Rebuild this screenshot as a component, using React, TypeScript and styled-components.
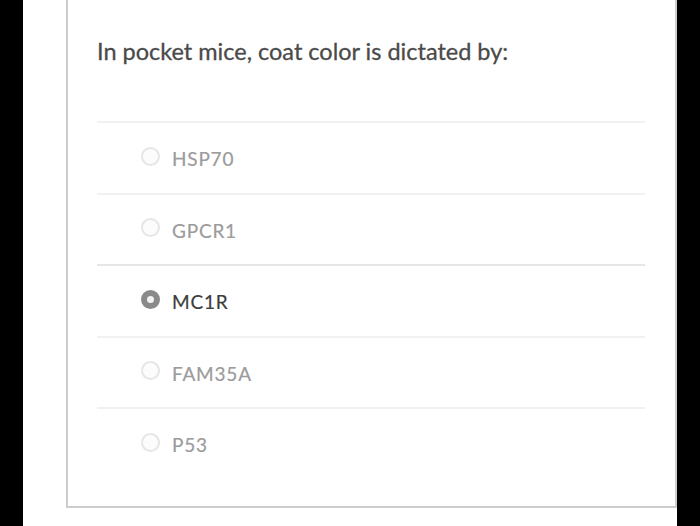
import React from "react";
import styled, { createGlobalStyle } from "styled-components";

const Global = createGlobalStyle`
  html, body { margin: 0; padding: 0; background: #000; }
  body { font-family: Lato, "Open Sans", sans-serif; }
`;

const Frame = styled.div`
  display: flex;
  width: 700px;
  height: 526px;
  background: #000;
  overflow: hidden;
`;

const Screen = styled.div`
  width: 654px;
  margin-left: 23px;
  height: 526px;
  background: #fff;
  padding-left: 43px;
  box-sizing: border-box;
`;

const Card = styled.div`
  width: 611px;
  height: 508px;
  box-sizing: border-box;
  border: 2px solid #cdcdcd;
  border-top: none;
  padding: 37px 30px 0 29px;
  background: #fff;
`;

const Title = styled.h2`
  margin: 0 0 56px 0;
  font-family: Lato, "Open Sans", sans-serif;
  font-size: 23.5px;
  line-height: 28px;
  font-weight: 400;
  color: #4a4a4a;
  -webkit-text-stroke: 0.3px #4a4a4a;
`;

const OptionRow = styled.div<{ $strong?: boolean }>`
  display: flex;
  align-items: center;
  height: 71.5px;
  box-sizing: border-box;
  border-top: 2px solid ${(p) => (p.$strong ? "#e6e6e6" : "#f1f1f1")};
  padding-left: 44px;
  gap: 12px;
`;

const Radio = styled.span<{ $checked?: boolean }>`
  width: 19px;
  height: 19px;
  box-sizing: border-box;
  border-radius: 50%;
  display: inline-flex;
  align-items: center;
  justify-content: center;
  margin-top: -3px;
  border: 2px solid ${(p) => (p.$checked ? "#8a8a8a" : "#e6e6e6")};
  background: ${(p) => (p.$checked ? "#8a8a8a" : "#fcfcfc")};
  &::after {
    content: "";
    width: 7px;
    height: 7px;
    border-radius: 50%;
    background: ${(p) => (p.$checked ? "#f2f2f2" : "transparent")};
  }
`;

const Label = styled.span<{ $checked?: boolean }>`
  font-family: Lato, "Open Sans", sans-serif;
  font-size: 19px;
  letter-spacing: 0.8px;
  margin-top: 2px;
  color: ${(p) => (p.$checked ? "#3c3c3c" : "#9b9b9b")};
  -webkit-text-stroke: 0.2px ${(p) => (p.$checked ? "#3c3c3c" : "#9b9b9b")};
`;

const options = ["HSP70", "GPCR1", "MC1R", "FAM35A", "P53"];
const selected = 2;

export default function App() {
  return (
    <>
      <Global />
      <Frame>
        <Screen>
          <Card>
            <Title>In pocket mice, coat color is dictated by:</Title>
            {options.map((o, i) => (
              <OptionRow key={o} $strong={i === selected}>
                <Radio $checked={i === selected} />
                <Label $checked={i === selected}>{o}</Label>
              </OptionRow>
            ))}
          </Card>
        </Screen>
      </Frame>
    </>
  );
}
